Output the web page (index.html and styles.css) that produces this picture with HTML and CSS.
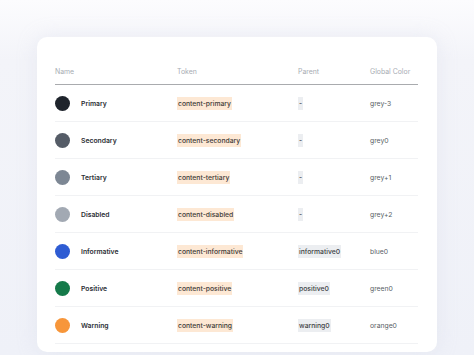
FILE: index.html
```html
<!DOCTYPE html>
<html>
<head>
<meta charset="utf-8">
<link rel="stylesheet" href="styles.css">
</head>
<body>
<div class="page">
  <div class="card">
    <div class="row head">
      <div>Name</div><div>Token</div><div>Parent</div><div>Global Color</div>
    </div>
    <div class="row">
      <div class="name"><span class="dot c1"></span>Primary</div>
      <div><span class="token">content-primary</span></div>
      <div><span class="parent">-</span></div>
      <div class="global">grey-3</div>
    </div>
    <div class="row">
      <div class="name"><span class="dot c2"></span>Secondary</div>
      <div><span class="token">content-secondary</span></div>
      <div><span class="parent">-</span></div>
      <div class="global">grey0</div>
    </div>
    <div class="row">
      <div class="name"><span class="dot c3"></span>Tertiary</div>
      <div><span class="token">content-tertiary</span></div>
      <div><span class="parent">-</span></div>
      <div class="global">grey+1</div>
    </div>
    <div class="row">
      <div class="name"><span class="dot c4"></span>Disabled</div>
      <div><span class="token">content-disabled</span></div>
      <div><span class="parent">-</span></div>
      <div class="global">grey+2</div>
    </div>
    <div class="row">
      <div class="name"><span class="dot c5"></span>Informative</div>
      <div><span class="token">content-informative</span></div>
      <div><span class="parent">informative0</span></div>
      <div class="global">blue0</div>
    </div>
    <div class="row">
      <div class="name"><span class="dot c6"></span>Positive</div>
      <div><span class="token">content-positive</span></div>
      <div><span class="parent">positive0</span></div>
      <div class="global">green0</div>
    </div>
    <div class="row">
      <div class="name"><span class="dot c7"></span>Warning</div>
      <div><span class="token">content-warning</span></div>
      <div><span class="parent">warning0</span></div>
      <div class="global">orange0</div>
    </div>
  </div>
</div>
</body>
</html>
```
FILE: styles.css
```css
html, body {
  margin: 0;
  height: 100%;
  overflow: hidden;
}
body {
  font-family: Inter, "Liberation Sans", sans-serif;
  background: linear-gradient(180deg, #fcfcfe 0px, #f3f4f9 60px, #eff1f8 100%);
}
.page {
  padding: 37px 37px 0 37px;
}
.card {
  background: #ffffff;
  border-radius: 10px;
  padding: 29px 19px 8px 18px;
  box-shadow: 0 0 20px rgba(200, 205, 225, 0.25);
}
.row {
  display: grid;
  grid-template-columns: 122px 121px 72px 1fr;
  align-items: center;
  height: 36px;
  border-bottom: 1px solid #f1f2f4;
  font-size: 6.8px;
  color: #555a61;
}
.row.head {
  height: 18px;
  align-items: start;
  line-height: 12px;
  border-bottom: 1px solid #a9abae;
  color: #a7acb3;
  font-size: 6.9px;
}
.name {
  display: flex;
  align-items: center;
  gap: 11px;
  font-weight: 600;
  color: #2b2e34;
}
.dot {
  width: 15px;
  height: 15px;
  border-radius: 50%;
  flex: none;
}
.c1 { background: #1f242c; }
.c2 { background: #555c67; }
.c3 { background: #7d8794; }
.c4 { background: #a2a9b3; }
.c5 { background: #2e5cd3; }
.c6 { background: #157a4a; }
.c7 { background: #f7963a; }
.token {
  background: #fde8d4;
  color: #3d3a37;
  font-weight: 500;
  padding: 2px 1px;
}
.parent {
  background: #eceef1;
  color: #3d3f44;
  font-weight: 500;
  padding: 2px 1px;
}
.global {
  color: #5a5f66;
}
```
